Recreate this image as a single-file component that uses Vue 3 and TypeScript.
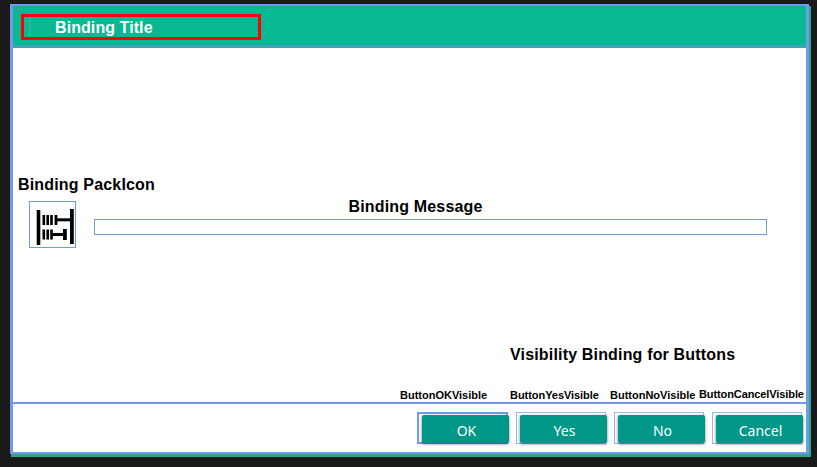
<script setup lang="ts">
interface Action { key: string; label: string; caption: string; primary?: boolean }
const actions: Action[] = [
  { key: 'ok', label: 'OK', caption: 'ButtonOKVisible', primary: true },
  { key: 'yes', label: 'Yes', caption: 'ButtonYesVisible' },
  { key: 'no', label: 'No', caption: 'ButtonNoVisible' },
  { key: 'cancel', label: 'Cancel', caption: 'ButtonCancelVisible' },
]
</script>

<template>
  <div class="page">
    <div class="window">
      <header class="titlebar">
        <div class="title-box">
          <span class="title-tick"></span>
          <span class="title">Binding Title</span>
        </div>
      </header>
      <main class="body">
        <div class="middle">
          <div class="icon-col">
            <div class="label icon-label">Binding PackIcon</div>
            <div class="icon-box">
              <svg width="45" height="45" viewBox="0 0 45 45" fill="#000">
                <rect x="6.7" y="8" width="3.6" height="35" />
                <rect x="12.5" y="13" width="2.6" height="10" />
                <rect x="16.4" y="13" width="2.6" height="10" />
                <rect x="20.2" y="13" width="2.6" height="10" />
                <rect x="24.6" y="13" width="2.8" height="10" />
                <rect x="25" y="16.3" width="16" height="3" />
                <rect x="40" y="7" width="3.8" height="35" />
                <rect x="12.5" y="27.5" width="2.6" height="10" />
                <rect x="16.4" y="27.5" width="2.6" height="10" />
                <rect x="20.2" y="27.5" width="2.6" height="10" />
                <rect x="21" y="31" width="13" height="3" />
                <rect x="33" y="27" width="3.8" height="11" />
              </svg>
            </div>
          </div>
          <div class="message-col">
            <div class="label message-label">Binding Message</div>
            <div class="message-box"></div>
          </div>
        </div>
        <div class="label visibility-label">Visibility Binding for Buttons</div>
        <div class="captions">
          <span v-for="a in actions" :key="a.key" class="caption" :class="`caption-${a.key}`">{{ a.caption }}</span>
        </div>
      </main>
      <footer class="footer">
        <div v-for="a in actions" :key="a.key" class="slot" :class="{ selected: a.primary }">
          <button class="btn" type="button">{{ a.label }}</button>
        </div>
      </footer>
      <div class="frame"></div>
    </div>
  </div>
</template>

<style>
html, body { margin: 0; background: #1a1a1a; }
</style>

<style scoped>
.page {
  width: 817px;
  height: 467px;
  box-sizing: border-box;
  padding: 6px 6px 10px 11px;
  background: #1a1a1a;
  overflow: hidden;
  font-family: "Liberation Sans", Arial, sans-serif;
}
.window {
  position: relative;
  width: 800px;
  height: 451px;
  box-sizing: border-box;
  border: 2px solid #2fa58c;
  border-top: 0;
  border-bottom-width: 3px;
  display: flex;
  flex-direction: column;
  background: #fff;
}
.titlebar {
  height: 42px;
  box-sizing: border-box;
  flex: none;
  padding: 8px 0 0 8px;
  background: linear-gradient(#06b992 0 39px, #4aa0bc 39px 41px, #3fa899 41px);
}
.title-box {
  width: 240px;
  height: 26px;
  box-sizing: border-box;
  border: 3px solid #f00;
  display: flex;
  align-items: center;
  position: relative;
  padding: 2px 0 0 31px;
}
.title-tick {
  position: absolute;
  left: 5px;
  top: 0;
  width: 2px;
  height: 20px;
  background: #2db3a6;
}
.title {
  color: #fff;
  font-weight: 700;
  font-size: 16px;
  letter-spacing: 0.08px;
}
.body {
  flex: 1;
  display: flex;
  flex-direction: column;
  min-height: 0;
}
.label {
  font-weight: 700;
  font-size: 16px;
  letter-spacing: 0.17px;
  color: #000;
  line-height: 18px;
  white-space: nowrap;
}
.middle {
  display: flex;
  margin-top: 128px;
  height: 73px;
}
.icon-col {
  width: 81px;
  box-sizing: border-box;
  flex: none;
  padding-left: 5px;
}
.icon-box {
  width: 47px;
  height: 47px;
  box-sizing: border-box;
  border: 1px solid #6f9bd6;
  margin: 7px 0 0 11px;
}
.icon-box svg { display: block; }
.message-col {
  width: 673px;
  display: flex;
  flex-direction: column;
  align-items: center;
  padding-top: 22px;
}
.message-label { margin-right: 30px; }
.message-box {
  width: 100%;
  height: 16px;
  box-sizing: border-box;
  border: 1px solid #6f9bd6;
  margin-top: 3px;
  flex: none;
}
.visibility-label { margin: 97px 0 0 497px; }
.captions {
  position: relative;
  margin-top: 19px;
  height: 19px;
}
.caption {
  position: absolute;
  font-size: 11px;
  font-weight: 700;
  line-height: 13px;
  color: #000;
  white-space: nowrap;
  top: 6px;
}
.caption-ok { left: 387px; }
.caption-yes { left: 497px; letter-spacing: -0.05px; }
.caption-no { left: 597px; }
.caption-cancel { left: 686px; top: 5px; letter-spacing: -0.1px; }
.footer {
  height: 52px;
  flex: none;
  box-sizing: border-box;
  border-top: 2px solid #6f9bea;
  display: flex;
  justify-content: flex-end;
  gap: 8px;
  padding: 8px 7px 0 0;
}
.slot {
  width: 90px;
  height: 32px;
  box-sizing: border-box;
  border: 1px solid #9db8e8;
  position: relative;
}
.slot.selected { border: 2px solid #6f9bea; width: 91px; }
.btn {
  position: absolute;
  left: 3px;
  top: 2px;
  width: 87px;
  height: 28px;
  border: 0;
  padding: 2px 0 0 2px;
  border-radius: 2px;
  background: #009688;
  color: #fff;
  font-family: "Noto Sans", "Open Sans", sans-serif;
  font-size: 14px;
  box-shadow: 0 1px 3px rgba(0, 0, 0, 0.55);
}
.slot.selected .btn { left: 3px; top: 1px; }
.frame {
  position: absolute;
  left: -3px;
  top: -2px;
  right: 0;
  bottom: 0;
  border-style: solid;
  border-color: #6f9bea;
  border-width: 2px 3px 2px 3px;
  pointer-events: none;
}
</style>
